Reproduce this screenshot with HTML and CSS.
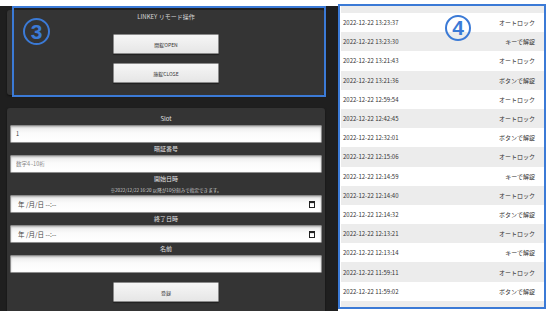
FILE: index.html
```html
<!DOCTYPE html>
<html lang="ja">
<head>
  <meta charset="UTF-8" />
  <title>LINKEY</title>
  <link rel="stylesheet" href="styles.css">
</head>
<body>

<div class="screen">
  <div class="control-col">
    <div class="panel remote">
      <div class="remote-title">LINKEY リモード操作</div>
      <button class="btn first">開錠OPEN</button>
      <button class="btn">施錠CLOSE</button>
    </div>

    <div class="panel form">
      <div class="label">Slot</div>
      <input class="field" type="text" value="1" />
      <div class="label">暗証番号</div>
      <input class="field" type="text" placeholder="数字4~10桁" />
      <div class="label">開始日時</div>
      <div class="note">※2022/12/22 16:20 以降が10分刻みで指定できます。</div>
      <div class="field date">
        <span>年 /月/日 --:--</span>
        <svg class="cal" width="6" height="7" viewBox="0 0 6 7"><rect x="0.5" y="0.5" width="5" height="6" fill="none" stroke="#222" stroke-width="1"/><rect x="0.5" y="0.5" width="5" height="1.6" fill="#222"/></svg>
      </div>
      <div class="label">終了日時</div>
      <div class="field date">
        <span>年 /月/日 --:--</span>
        <svg class="cal" width="6" height="7" viewBox="0 0 6 7"><rect x="0.5" y="0.5" width="5" height="6" fill="none" stroke="#222" stroke-width="1"/><rect x="0.5" y="0.5" width="5" height="1.6" fill="#222"/></svg>
      </div>
      <div class="label">名前</div>
      <input class="field" type="text" />
      <button class="btn submit">登録</button>
    </div>
  </div>

  <div class="log-col">
    <div class="log-row spacer"></div>
    <div class="log-row"><span>2022-12-22 13:23:37</span><span>オートロック</span></div>
    <div class="log-row"><span>2022-12-22 13:23:30</span><span>キーで解錠</span></div>
    <div class="log-row"><span>2022-12-22 13:21:43</span><span>オートロック</span></div>
    <div class="log-row"><span>2022-12-22 13:21:36</span><span>ボタンで解錠</span></div>
    <div class="log-row"><span>2022-12-22 12:59:54</span><span>オートロック</span></div>
    <div class="log-row"><span>2022-12-22 12:42:45</span><span>オートロック</span></div>
    <div class="log-row"><span>2022-12-22 12:32:01</span><span>ボタンで解錠</span></div>
    <div class="log-row"><span>2022-12-22 12:15:06</span><span>オートロック</span></div>
    <div class="log-row"><span>2022-12-22 12:14:59</span><span>キーで解錠</span></div>
    <div class="log-row"><span>2022-12-22 12:14:40</span><span>オートロック</span></div>
    <div class="log-row"><span>2022-12-22 12:14:32</span><span>ボタンで解錠</span></div>
    <div class="log-row"><span>2022-12-22 12:13:21</span><span>オートロック</span></div>
    <div class="log-row"><span>2022-12-22 12:13:14</span><span>キーで解錠</span></div>
    <div class="log-row"><span>2022-12-22 11:59:11</span><span>オートロック</span></div>
    <div class="log-row"><span>2022-12-22 11:59:02</span><span>ボタンで解錠</span></div>
    <div class="log-row"><span></span><span></span></div>
  </div>
</div>

<!-- annotation frames -->
<div class="mark mark-3"><span class="badge">3</span></div>
<div class="mark mark-4"><span class="badge">4</span></div>

</body>
</html>
```

FILE: styles.css
```css
body {
  margin: 0;
  background: #fff;
  font-family: "Noto Sans CJK JP", "Noto Sans", sans-serif;
  position: relative;
  width: 547px;
  height: 311px;
  overflow: hidden;
}

.screen {
  display: flex;
  margin-top: 6px;
  height: 305px;
}

.control-col {
  width: 318px;
  background: #1f1f1f;
  padding: 4px 13px 0 7px;
}

.panel {
  background: #343434;
  border-radius: 3px;
  box-shadow: 0 1px 2px rgba(0, 0, 0, 0.5);
}

.remote {
  height: 85px;
  display: flex;
  flex-direction: column;
  align-items: center;
  box-sizing: border-box;
  padding-top: 3px;
}

.remote-title {
  color: #d8d8d8;
  font-size: 6px;
  line-height: 8px;
  margin-bottom: 13px;
}

.btn {
  width: 106px;
  height: 20px;
  margin: 0;
  padding: 0;
  border: 1px solid #8a8a8a;
  border-radius: 1px;
  background: linear-gradient(#f6f6f6, #e6e6e6);
  color: #333;
  font-family: inherit;
  font-size: 5px;
  box-shadow: 0 1px 1px rgba(0, 0, 0, 0.4);
}

.btn.first {
  margin-bottom: 9px;
}

.form {
  margin-top: 13px;
  height: 200px;
  padding: 5px 3px 0;
  display: flex;
  flex-direction: column;
  border-radius: 3px 3px 0 0;
}

.label {
  height: 12px;
  line-height: 12px;
  text-align: center;
  color: #e2e2e2;
  font-size: 6px;
}

.note {
  height: 10px;
  line-height: 10px;
  text-align: center;
  color: #d0d0d0;
  font-size: 4.6px;
}

.field {
  box-sizing: border-box;
  width: 312px;
  height: 18px;
  margin: 0;
  padding: 0 5px;
  border: 1px solid #8c8c8c;
  border-radius: 1px;
  background: linear-gradient(#e9e9e9, #fbfbfb 45%, #fff);
  box-shadow: inset 0 1px 2px rgba(0, 0, 0, 0.25);
  font-family: inherit;
  font-size: 5.5px;
  color: #333;
  outline: none;
}

.field::placeholder {
  color: #888;
}

.date {
  display: flex;
  align-items: center;
  justify-content: space-between;
  padding: 0 6px 0 7px;
  font-size: 6.5px;
  color: #444;
}

.cal {
  display: block;
}

.submit {
  align-self: center;
  margin-top: 9px;
}

.log-col {
  width: 203px;
  height: 301px;
  overflow: hidden;
  padding: 0 3px;
  background: #fff;
}

.log-row {
  height: 19.2px;
  display: flex;
  align-items: center;
  justify-content: space-between;
  padding: 0 9px 0 2px;
  font-size: 6px;
  color: #333;
}

.log-row:nth-child(odd) {
  background: #ececec;
}

.log-row.spacer {
  height: 7px;
}

.mark {
  position: absolute;
  border: 2px solid #3b7ad6;
  box-sizing: border-box;
}

.mark-3 {
  left: 12px;
  top: 6px;
  width: 314px;
  height: 91px;
}

.mark-4 {
  left: 338px;
  top: 4px;
  width: 208px;
  height: 305px;
}

.badge {
  position: absolute;
  width: 27px;
  height: 27px;
  box-sizing: border-box;
  border: 2px solid #3b7ad6;
  border-radius: 50%;
  color: #3b7ad6;
  font-family: "Liberation Sans", sans-serif;
  font-weight: bold;
  font-size: 21px;
  line-height: 23px;
  text-align: center;
}

.mark-3 .badge {
  left: 9px;
  top: 10px;
}

.mark-4 .badge {
  left: 105px;
  top: 9px;
  width: 26px;
  height: 26px;
  line-height: 22px;
}
```
